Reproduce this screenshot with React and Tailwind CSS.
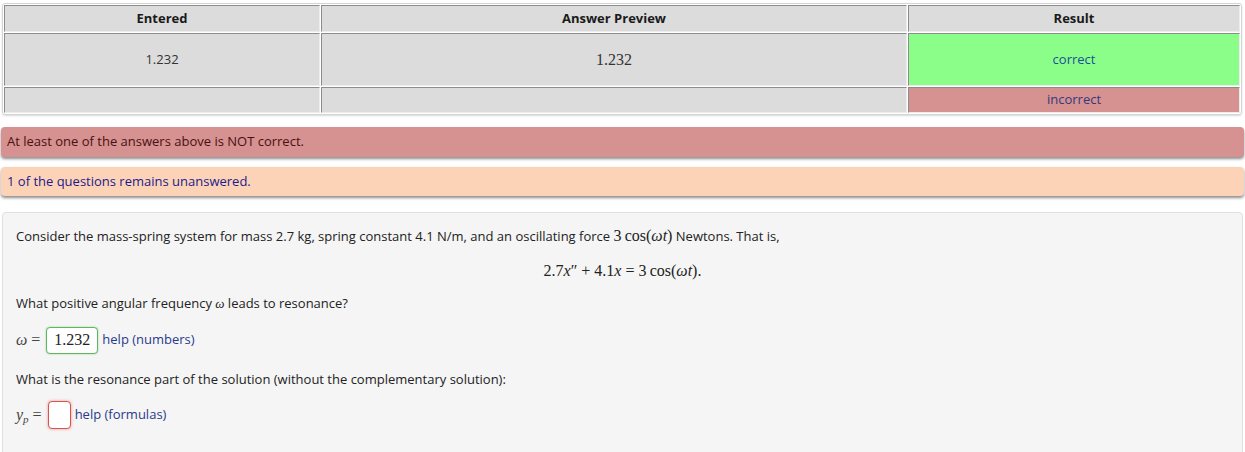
import React from 'react';

const sans = { fontFamily: '"Open Sans", "Noto Sans", sans-serif' };

const Math = ({ children, className = '' }) => (
    <span className={`font-['Liberation_Serif',serif] text-[16px] ${className}`}>{children}</span>
);

const V = ({ children }) => <i className="font-['Liberation_Serif',serif]">{children}</i>;

const cell = 'border-t border-l border-t-[#8c8c8c] border-l-[#8c8c8c] border-b border-r border-b-[#ececec] border-r-[#ececec] text-center align-middle';

export default function App() {
    return (
        <div className="w-[1245px] h-[452px] overflow-hidden bg-white text-[13px] text-[#222]" style={sans}>
            {/* Results table */}
            <div className="pl-[2px] pr-[3px] pt-[3px]">
                <table className="w-[1240px] border border-[#d4d4d4] rounded-[3px] border-separate border-spacing-[1px] shadow-[0_1px_2px_rgba(0,0,0,0.15)]">
                    <thead>
                        <tr className="h-[27px]">
                            <th className={`${cell} w-[316px] bg-[#dcdcdc] font-bold text-[#1a1a1a]`}>Entered</th>
                            <th className={`${cell} w-[586px] bg-[#dcdcdc] font-bold text-[#1a1a1a]`}>Answer Preview</th>
                            <th className={`${cell} bg-[#dcdcdc] font-bold text-[#1a1a1a]`}>Result</th>
                        </tr>
                    </thead>
                    <tbody>
                        <tr className="h-[53px]">
                            <td className={`${cell} bg-[#dcdcdc] text-[#333]`}>1.232</td>
                            <td className={`${cell} bg-[#dcdcdc]`}><Math className="text-[#333]">1.232</Math></td>
                            <td className={`${cell} bg-[#8bfe8a] text-[#1c4f99]`}>correct</td>
                        </tr>
                        <tr className="h-[26px]">
                            <td className={`${cell} bg-[#dcdcdc]`}></td>
                            <td className={`${cell} bg-[#dcdcdc]`}></td>
                            <td className={`${cell} bg-[#d69191] text-[#333a7a]`}>incorrect</td>
                        </tr>
                    </tbody>
                </table>
            </div>

            {/* Alerts */}
            <div className="mt-[12px] mx-[1px] h-[30px] flex items-center px-[6px] bg-[#d69191] text-[#4a1010] rounded-[4px] shadow-[0_2px_3px_rgba(0,0,0,0.45)]">
                At least one of the answers above is NOT correct.
            </div>
            <div className="mt-[10px] mx-[1px] h-[29px] flex items-center px-[6px] bg-[#fdd3b8] text-[#1b1b8a] rounded-[4px] shadow-[0_2px_3px_rgba(0,0,0,0.45)]">
                1 of the questions remains unanswered.
            </div>

            {/* Problem body */}
            <div className="mt-[16px] mx-[2px] h-[260px] bg-[#f5f5f5] border border-[#e0e0e0] rounded-t-[4px] pl-[13px] pt-[14px] text-[#222]">
                <p className="h-[18px] leading-[18px]">
                    Consider the mass-spring system for mass 2.7 kg, spring constant 4.1 N/m, and an oscillating force{' '}
                    <Math>3&thinsp;cos(<V>ωt</V>)</Math> Newtons. That is,
                </p>
                <div className="mt-[14px] h-[20px] text-center pr-[13px]">
                    <Math>2.7<V>x</V>″ + 4.1<V>x</V> = 3&thinsp;cos(<V>ωt</V>).</Math>
                </div>
                <p className="mt-[15px] h-[18px] leading-[18px]">
                    What positive angular frequency <V>ω</V> leads to resonance?
                </p>
                <div className="mt-[14px] flex items-center h-[28px]">
                    <Math className="text-[#444]"><V>ω</V> =</Math>
                    <div className="ml-[6px] h-[27px] px-[7px] flex items-center border border-[#5cb85c] rounded-[4px] bg-white shadow-[0_0_2px_rgba(92,184,92,0.6)]">
                        <Math className="text-[#222]">1.232</Math>
                    </div>
                    <span className="ml-[4px] text-[#2a3a8c]">help (numbers)</span>
                </div>
                <p className="mt-[16px] h-[18px] leading-[18px]">
                    What is the resonance part of the solution (without the complementary solution):
                </p>
                <div className="mt-[13px] flex items-center h-[28px]">
                    <Math className="text-[#444]"><V>y</V><sub className="text-[11px]"><V>p</V></sub> =</Math>
                    <div className="ml-[6px] h-[28px] w-[23px] border border-[#d9534f] rounded-[4px] bg-white shadow-[0_0_3px_rgba(217,83,79,0.6)]"></div>
                    <span className="ml-[4px] text-[#2a3a8c]">help (formulas)</span>
                </div>
            </div>
        </div>
    );
}
